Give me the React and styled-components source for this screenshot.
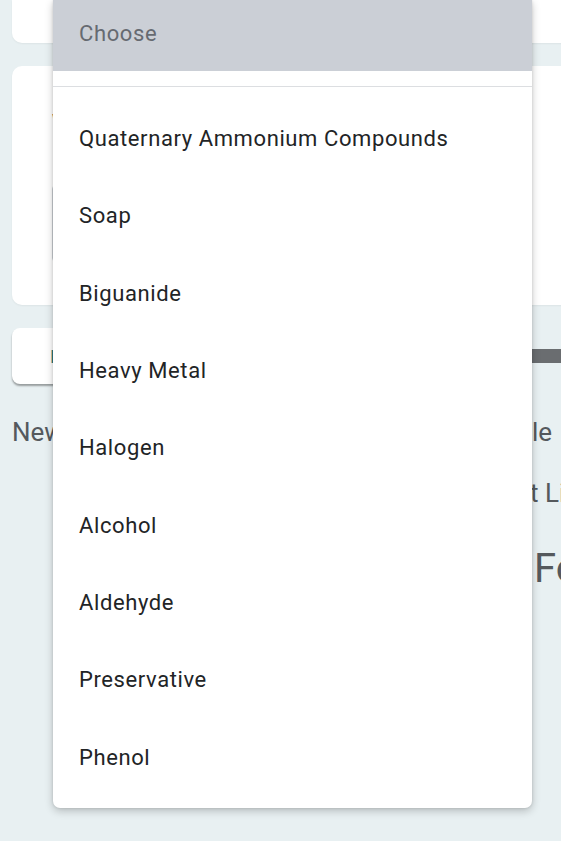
import React from "react";
import styled, { createGlobalStyle } from "styled-components";

const Global = createGlobalStyle`
  html, body { margin: 0; padding: 0; }
  body {
    background: #e8f0f2;
    font-family: Roboto, "Noto Sans", "Liberation Sans", sans-serif;
    overflow: hidden;
    width: 561px;
    height: 841px;
  }
`;

const Page = styled.div`
  position: relative;
  width: 600px;
  padding-left: 12px;
  box-sizing: border-box;
  display: flex;
  flex-direction: column;
  gap: 23px;
`;

const Card = styled.div`
  background: #ffffff;
  border-radius: ${(p) => (p.$cut ? "0 0 10px 10px" : "10px")};
  height: ${(p) => p.$h}px;
  box-sizing: border-box;
  padding-top: 1px;
  box-shadow: 0 1px 2px rgba(0, 0, 0, 0.05);
`;

const Label = styled.div`
  font-size: 16px;
  color: #333;
  margin: 44px 0 0 40px;
  height: 20px;
`;

const Input = styled.div`
  margin: 54px 0 0 40px;
  width: 420px;
  height: 75px;
  border: 1px solid #c9ced3;
  border-radius: 4px;
`;

const ActionRow = styled.div`
  display: flex;
  align-items: center;
`;

const Button = styled.div`
  background: #fff;
  border-radius: 8px;
  height: 56px;
  width: 380px;
  box-shadow: 0 2px 2px rgba(0, 0, 0, 0.35);
  display: flex;
  align-items: center;
  padding-left: 38px;
  box-sizing: border-box;
  color: #2a7a7a;
  font-size: 18px;
`;

const Progress = styled.div`
  margin-left: 140px;
  height: 14px;
  width: 80px;
  background: #6a6d70;
`;

const Heading = styled.div`
  display: grid;
  grid-template-columns: ${(p) => p.$col}px auto;
  font-size: ${(p) => p.$size}px;
  color: #55595d;
  margin-top: ${(p) => p.$mt || 0}px;
  line-height: 1.2;
  white-space: nowrap;
`;

const Menu = styled.div`
  position: absolute;
  left: 53px;
  top: 0;
  width: 479px;
  height: 808px;
  background: #fff;
  border-radius: 0 0 7px 7px;
  box-shadow: 0 3px 8px rgba(0, 0, 0, 0.22), 0 0 3px rgba(0, 0, 0, 0.12);
  display: flex;
  flex-direction: column;
  overflow: hidden;
`;

const MenuHead = styled.div`
  height: 71px;
  background: #cbcfd6;
  color: #666a71;
  font-size: 22px;
  display: flex;
  align-items: center;
  padding: 0 0 4px 26px;
  box-sizing: border-box;
  letter-spacing: 0.6px;
`;

const Divider = styled.div`
  margin-top: 15px;
  border-top: 1px solid #dcdee1;
`;

const List = styled.ul`
  list-style: none;
  margin: 0;
  padding: 13px 0 12px;
`;

const Item = styled.li`
  height: 77.3px;
  display: flex;
  align-items: center;
  padding-left: 26px;
  font-size: 22px;
  color: #222426;
  letter-spacing: 0.6px;
`;

const items = [
  "Quaternary Ammonium Compounds",
  "Soap",
  "Biguanide",
  "Heavy Metal",
  "Halogen",
  "Alcohol",
  "Aldehyde",
  "Preservative",
  "Phenol",
];

export default function App() {
  return (
    <>
      <Global />
      <Page>
        <Card $cut $h={43} />
        <Card $h={239}>
          <Label>W</Label>
          <Input />
        </Card>
        <ActionRow>
          <Button>I</Button>
          <Progress />
        </ActionRow>
        <Heading $size={26} $mt={10} $col={520}>
          <span>New</span>
          <span>le</span>
        </Heading>
        <Heading $size={26} $mt={7} $col={518}>
          <span></span>
          <span>t List</span>
        </Heading>
        <Heading $size={40} $mt={13} $col={522}>
          <span></span>
          <span>Form</span>
        </Heading>
      </Page>
      <Menu>
        <MenuHead>Choose</MenuHead>
        <Divider />
        <List>
          {items.map((t) => (
            <Item key={t}>{t}</Item>
          ))}
        </List>
      </Menu>
    </>
  );
}
